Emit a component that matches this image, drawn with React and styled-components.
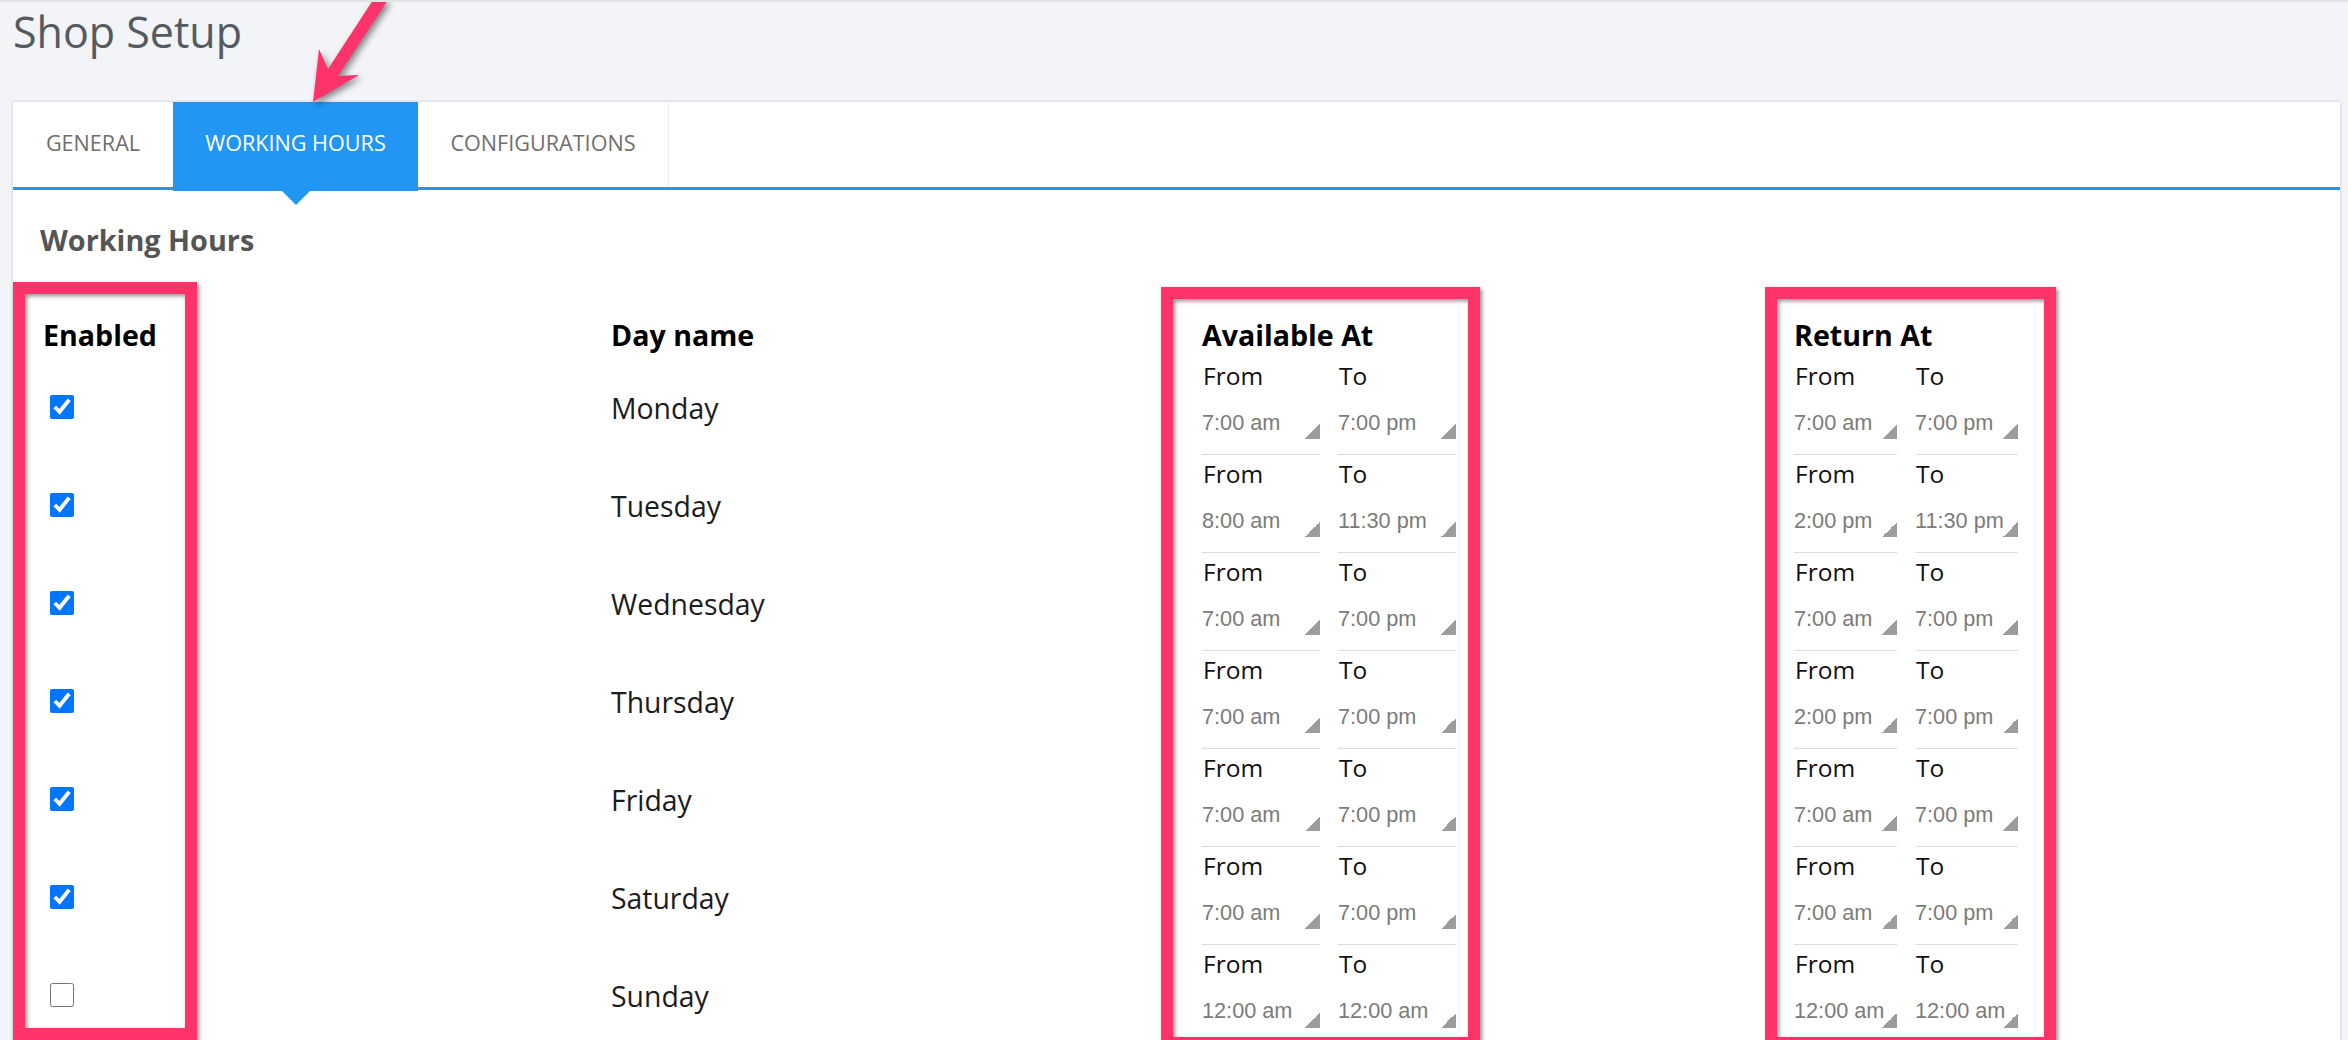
import React from 'react';
import styled, { createGlobalStyle } from 'styled-components';

const Global = createGlobalStyle`
  html, body { margin: 0; padding: 0; height: 100%; overflow: hidden; background: #f2f4f8; }
  body { font-family: "Open Sans", "Liberation Sans", sans-serif; color: #111; }
  * { box-sizing: border-box; }
`;

const PINK = '#fd3369';
const BLUE = '#2196f3';
const COLUMNS = '568px 591px 592px 1fr';

const Page = styled.div`
  position: relative;
  width: 2348px;
  height: 1040px;
  overflow: hidden;
  border-top: 2px solid #e2e3e5;
`;
const PageHead = styled.header`
  height: 100px;
  padding: 4px 0 0 13px;
`;
const Title = styled.h1`
  margin: 0;
  font-size: 43px;
  line-height: 52px;
  font-weight: 400;
  color: #555a60;
`;
const Card = styled.section`
  margin: 0 8px 0 13px;
  height: 960px;
  background: #fff;
  box-shadow: 0 0 3px rgba(0, 0, 0, 0.2);
`;
const Tabs = styled.nav`
  display: flex;
  height: 88px;
  border-bottom: 3px solid ${BLUE};
`;
const Tab = styled.a`
  position: relative;
  display: block;
  height: ${p => (p.$active ? '89px' : '85px')};
  width: ${p => p.$width}px;
  padding-top: 26px;
  text-align: center;
  font-size: 21.6px;
  line-height: 30px;
  color: ${p => (p.$active ? '#fff' : '#6f6f6f')};
  background: ${p => (p.$active ? BLUE : '#fff')};
  border-right: ${p => (p.$divider ? '1px solid #eeeeee' : 'none')};
  ${p =>
    p.$active &&
    `&::after {
      content: '';
      position: absolute;
      left: 50%;
      top: 100%;
      margin-left: -14px;
      border-left: 14px solid transparent;
      border-right: 14px solid transparent;
      border-top: 14px solid ${BLUE};
    }`}
`;
const Body = styled.div`
  padding: 30px 0 0 27px;
`;
const Heading = styled.h2`
  margin: 0;
  font-size: 28.8px;
  line-height: 40px;
  font-weight: 700;
  color: #555;
`;
const Table = styled.div`
  padding: 55px 0 0 3px;
`;
const HeadRow = styled.div`
  display: grid;
  grid-template-columns: ${COLUMNS};
  height: 42px;
`;
const ColumnTitle = styled.div`
  font-size: 28.6px;
  line-height: 40px;
  font-weight: 700;
  color: #000;
`;
const Row = styled.div`
  display: grid;
  grid-template-columns: ${COLUMNS};
  height: 98px;
`;
const CheckCell = styled.div`
  padding: 38px 0 0 7px;
`;
const Check = styled.input.attrs({ type: 'checkbox' })`
  display: block;
  margin: 0;
  width: 24px;
  height: 24px;
`;
const DayName = styled.div`
  padding-top: 32px;
  font-size: 28.4px;
  line-height: 38px;
  color: #1c1c1c;
`;
const Pair = styled.div`
  display: flex;
  gap: 18px;
`;
const Field = styled.div`
  width: ${p => p.$width}px;
`;
const FieldLabel = styled.div`
  padding: 2px 0 0 1px;
  font-size: 24.5px;
  line-height: 34px;
  color: #111;
`;
const TimeSelect = styled.div`
  height: 62px;
  padding-top: 18px;
  font-family: "Liberation Sans", Arial, sans-serif;
  font-size: 21.7px;
  line-height: 24px;
  color: #7b7b7b;
  border-bottom: ${p => (p.$last ? 'none' : '1px solid #dcdcdc')};
  background: linear-gradient(to bottom right, transparent 50%, #9c9c9c 50%) right bottom 15px / 15px 15px no-repeat;
`;
const Callout = styled.div`
  position: absolute;
  left: ${p => p.$left}px;
  top: ${p => p.$top}px;
  width: ${p => p.$width}px;
  height: ${p => p.$height}px;
  border: 12.5px solid ${PINK};
  box-shadow: 2px 2px 4px rgba(0, 0, 0, 0.45), inset 2px 2px 4px rgba(0, 0, 0, 0.45);
  pointer-events: none;
`;
const Arrow = styled.svg`
  position: absolute;
  left: 300px;
  top: -2px;
  width: 110px;
  height: 120px;
  overflow: visible;
  filter: drop-shadow(3px 3px 3px rgba(0, 0, 0, 0.45));
`;

const available = [
  ['7:00 am', '7:00 pm'], ['8:00 am', '11:30 pm'], ['7:00 am', '7:00 pm'], ['7:00 am', '7:00 pm'],
  ['7:00 am', '7:00 pm'], ['7:00 am', '7:00 pm'], ['12:00 am', '12:00 am'],
];
const returns = [
  ['7:00 am', '7:00 pm'], ['2:00 pm', '11:30 pm'], ['7:00 am', '7:00 pm'], ['2:00 pm', '7:00 pm'],
  ['7:00 am', '7:00 pm'], ['7:00 am', '7:00 pm'], ['12:00 am', '12:00 am'],
];
const days = ['Monday', 'Tuesday', 'Wednesday', 'Thursday', 'Friday', 'Saturday', 'Sunday'];

const Times = ({ values, width, last }) => (
  <Pair>
    <Field $width={width}>
      <FieldLabel>From</FieldLabel>
      <TimeSelect $last={last}>{values[0]}</TimeSelect>
    </Field>
    <Field $width={width}>
      <FieldLabel>To</FieldLabel>
      <TimeSelect $last={last}>{values[1]}</TimeSelect>
    </Field>
  </Pair>
);

export default function App() {
  return (
    <Page>
      <Global />
      <PageHead>
        <Title>Shop Setup</Title>
      </PageHead>
      <Card>
        <Tabs>
          <Tab $width={160}>GENERAL</Tab>
          <Tab $width={245} $active>WORKING HOURS</Tab>
          <Tab $width={251} $divider>CONFIGURATIONS</Tab>
        </Tabs>
        <Body>
          <Heading>Working Hours</Heading>
          <Table>
            <HeadRow>
              <ColumnTitle>Enabled</ColumnTitle>
              <ColumnTitle>Day name</ColumnTitle>
              <ColumnTitle>Available At</ColumnTitle>
              <ColumnTitle>Return At</ColumnTitle>
            </HeadRow>
            {days.map((day, i) => (
              <Row key={day}>
                <CheckCell>
                  <Check defaultChecked={i < 6} />
                </CheckCell>
                <DayName>{day}</DayName>
                <Times values={available[i]} width={118} last={i === 6} />
                <Times values={returns[i]} width={103} last={i === 6} />
              </Row>
            ))}
          </Table>
        </Body>
      </Card>
      <Callout $left={13} $top={280} $width={184} $height={758} />
      <Callout $left={1161} $top={285} $width={319} $height={762} />
      <Callout $left={1765} $top={285} $width={291} $height={762} />
      <Arrow viewBox="300 0 110 120">
        <polygon points="313,102 319,49 328,69 373,0 388,0 338,76 359,75" fill={PINK} />
      </Arrow>
    </Page>
  );
}
